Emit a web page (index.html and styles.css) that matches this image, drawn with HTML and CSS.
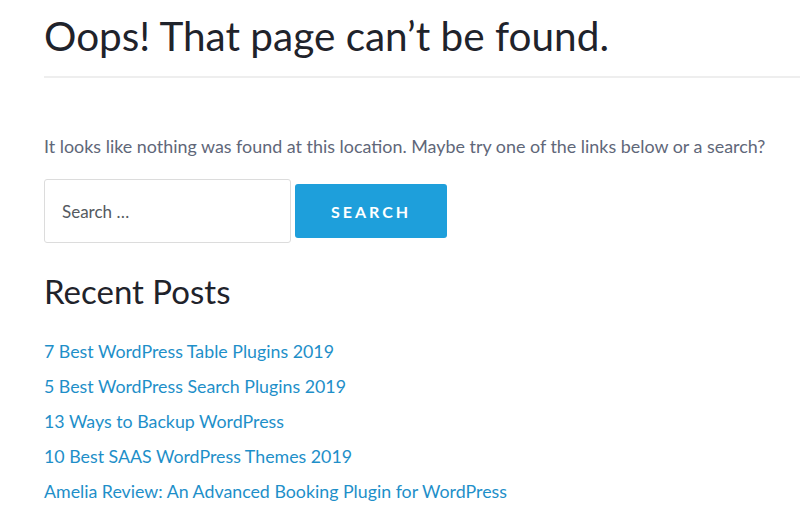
FILE: index.html
```html
<!DOCTYPE html>
<html lang="en">
<head>
  <meta charset="UTF-8" />
  <title>Page not found</title>
  <link rel="stylesheet" href="styles.css">
</head>
<body>
  <main class="content">
    <header class="page-header">
      <h1 class="page-title">Oops! That page can’t be found.</h1>
    </header>

    <div class="page-content">
      <p>It looks like nothing was found at this location. Maybe try one of the links below or a search?</p>

      <form class="search-form" onsubmit="return false;">
        <input type="search" class="search-field" placeholder="Search …" />
        <button type="submit" class="search-submit">Search</button>
      </form>

      <section class="widget">
        <h2 class="widget-title">Recent Posts</h2>
        <ul class="recent-posts">
          <li><a href="#">7 Best WordPress Table Plugins 2019</a></li>
          <li><a href="#">5 Best WordPress Search Plugins 2019</a></li>
          <li><a href="#">13 Ways to Backup WordPress</a></li>
          <li><a href="#">10 Best SAAS WordPress Themes 2019</a></li>
          <li><a href="#">Amelia Review: An Advanced Booking Plugin for WordPress</a></li>
        </ul>
      </section>
    </div>
  </main>
</body>
</html>
```

FILE: styles.css
```css
body {
  margin: 0;
  font-family: Lato, 'Open Sans', sans-serif;
  background: #fff;
  color: #1e2128;
}
.content {
  padding-left: 44px;
}
.page-header {
  border-bottom: 2px solid #eeeeee;
  padding-top: 10px;
  padding-bottom: 14px;
}
.page-title {
  margin: 0;
  font-size: 40.5px;
  font-weight: 400;
  line-height: 52px;
  color: #1f232b;
}
.page-content p {
  margin: 56px 0 0;
  font-size: 17.9px;
  line-height: 24px;
  color: #5f6779;
}
.search-form {
  display: flex;
  align-items: center;
  gap: 4px;
  margin-top: 21px;
}
.search-field {
  box-sizing: border-box;
  width: 247px;
  height: 64px;
  padding: 0 17px;
  border: 1px solid #dcdcdc;
  border-radius: 3px;
  font-family: inherit;
  font-size: 17px;
  color: #333;
}
.search-field::placeholder {
  color: #555a60;
}
.search-submit {
  width: 152px;
  height: 54px;
  border: none;
  border-radius: 3px;
  background: #1e9fdb;
  color: #fff;
  font-family: inherit;
  font-size: 16px;
  font-weight: 700;
  letter-spacing: 3px;
  text-transform: uppercase;
  cursor: pointer;
}
.widget-title {
  margin: 28px 0 0;
  font-size: 33px;
  font-weight: 400;
  line-height: 40px;
  color: #1f232b;
}
.recent-posts {
  list-style: none;
  margin: 23px 0 0;
  padding: 0;
}
.recent-posts li {
  font-size: 17.8px;
  line-height: 35px;
}
.recent-posts a {
  color: #1e8fc9;
  text-decoration: none;
}
```
